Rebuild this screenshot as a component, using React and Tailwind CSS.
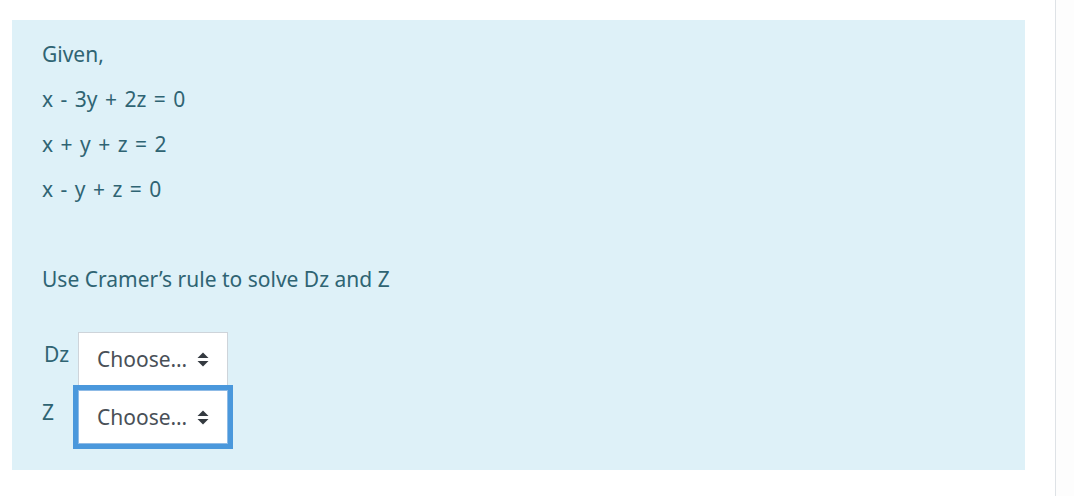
import React from 'react';

const SelectBox = ({ focused }) => (
  <div
    className={
      'relative flex h-[54px] w-[150px] items-center justify-between border bg-white pl-[18px] pr-[18px] text-[#495057] ' +
      (focused ? 'border-[#8fbbe6] shadow-[0_0_0_5px_#4a98dc]' : 'border-[#ced4da]')
    }
  >
    <span>Choose…</span>
    <svg width="12" height="15" viewBox="0 0 12 15" className="shrink-0">
      <path d="M6 0.5 L11.5 6 H0.5 Z" fill="#343a40" />
      <path d="M6 14.5 L11.5 9 H0.5 Z" fill="#343a40" />
    </svg>
  </div>
);

export default function App() {
  return (
    <div
      className="flex min-h-[496px] bg-white text-[21px] text-[#2f6473]"
      style={{ fontFamily: '"Noto Sans", "Open Sans", sans-serif' }}
    >
      <div className="w-[1055px] shrink-0 pl-[12px] pt-[20px]">
        <div className="h-[450px] w-[1013px] bg-[#def1f8] pl-[30px] pt-[19px]">
          <p className="mb-[15px] leading-[30px]">Given,</p>
          <p className="mb-[15px] leading-[30px] [word-spacing:2px]">x - 3y + 2z = 0</p>
          <p className="mb-[15px] leading-[30px] [word-spacing:2px]">x + y + z = 2</p>
          <p className="mb-[15px] leading-[30px] [word-spacing:2px]">x - y + z = 0</p>
          <p className="mb-[15px] leading-[30px]">&nbsp;</p>
          <p className="mb-[15px] leading-[30px]">Use Cramer’s rule to solve Dz and Z</p>

          <div className="mt-[38px] grid grid-cols-[36px_auto] justify-start gap-y-[4px] leading-[30px]">
            <span className="pl-[2px] pt-[7px]">Dz</span>
            <SelectBox />
            <span className="pt-[7px]">Z</span>
            <SelectBox focused />
          </div>
        </div>
      </div>
      <div className="flex-1 border-l border-[#dee2e6] bg-[#fdfdfd]" />
    </div>
  );
}
